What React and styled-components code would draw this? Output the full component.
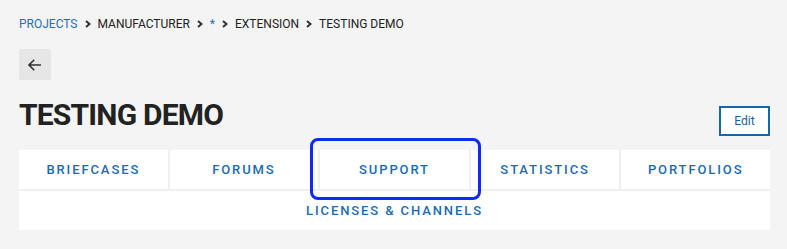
import React from 'react'
import styled, { createGlobalStyle } from 'styled-components'

const crumbs = [
  { label: 'PROJECTS', link: true },
  { label: 'MANUFACTURER' },
  { label: '*', link: true },
  { label: 'EXTENSION' },
  { label: 'TESTING DEMO' },
]

const tabs = ['BRIEFCASES', 'FORUMS', 'SUPPORT', 'STATISTICS', 'PORTFOLIOS']

function Chevron() {
  return (
    <svg width="6" height="8" viewBox="0 0 6 8">
      <path d="M1 1 L4.5 4 L1 7" fill="none" stroke="#333" strokeWidth="2" />
    </svg>
  )
}

function App() {
  return (
    <>
      <GlobalStyle />
      <Page>
        <Breadcrumbs>
          {crumbs.map((c, i) => (
            <React.Fragment key={i}>
              {i > 0 && <Sep><Chevron /></Sep>}
              <Crumb $link={c.link}>{c.label}</Crumb>
            </React.Fragment>
          ))}
        </Breadcrumbs>
        <BackButton aria-label="back">
          <svg width="18" height="18" viewBox="0 0 24 24">
            <path d="M20 12H5M11 5l-7 7 7 7" fill="none" stroke="#333" strokeWidth="2.2" />
          </svg>
        </BackButton>
        <Header>
          <Title>TESTING DEMO</Title>
          <EditButton>Edit</EditButton>
        </Header>
        <TabPanel>
          <TabRow>
            {tabs.map((t) => (
              <Tab key={t} $focused={t === 'SUPPORT'}>{t}</Tab>
            ))}
          </TabRow>
          <Tab>LICENSES &amp; CHANNELS</Tab>
        </TabPanel>
      </Page>
    </>
  )
}

const GlobalStyle = createGlobalStyle`
  body {
    margin: 0;
    background-color: #f4f4f4;
    font-family: Roboto, "Liberation Sans", sans-serif;
  }
`

const Page = styled.div`
  padding: 14px 17px 0 19px;
`

const Breadcrumbs = styled.div`
  display: flex;
  align-items: center;
  height: 19px;
  font-size: 12px;
`

const Crumb = styled.span`
  color: ${(p) => (p.$link ? '#1f6fc5' : '#222')};
`

const Sep = styled.span`
  display: flex;
  align-items: center;
  margin: 0 7px;
`

const BackButton = styled.button`
  display: flex;
  align-items: center;
  justify-content: center;
  margin-top: 16px;
  width: 32px;
  height: 31px;
  padding: 0;
  border: none;
  border-radius: 2px;
  background: #e6e6e6;
`

const Header = styled.div`
  display: flex;
  justify-content: space-between;
  align-items: flex-end;
  margin-top: 17px;
`

const Title = styled.h1`
  margin: 0;
  font-size: 30px;
  font-weight: 700;
  line-height: 36px;
  color: #222;
  letter-spacing: -0.8px;
`

const EditButton = styled.button`
  width: 51px;
  height: 30px;
  border: 2px solid #1766aa;
  background: #fff;
  color: #1a5fa0;
  font-family: Roboto, sans-serif;
  font-size: 12px;
  margin-bottom: -3px;
`

const TabPanel = styled.div`
  margin-top: 17px;
  background: #f0f0f0;
  display: flex;
  flex-direction: column;
  gap: 2px;
`

const TabRow = styled.div`
  display: grid;
  grid-template-columns: repeat(5, 1fr);
  gap: 2px;
  position: relative;
  z-index: 1;
`

const Tab = styled.div`
  position: relative;
  height: 39px;
  background: #fff;
  display: flex;
  align-items: center;
  justify-content: center;
  color: #1a6bb8;
  font-size: 13px;
  font-weight: 500;
  letter-spacing: 1.9px;
  ${(p) =>
    p.$focused &&
    `
    z-index: 1;
    &::after {
      content: '';
      position: absolute;
      top: -12px;
      bottom: -11px;
      left: -10px;
      right: -12px;
      border: 3px solid #0a2cf5;
      border-radius: 8px;
    }
  `}
`

export default App
